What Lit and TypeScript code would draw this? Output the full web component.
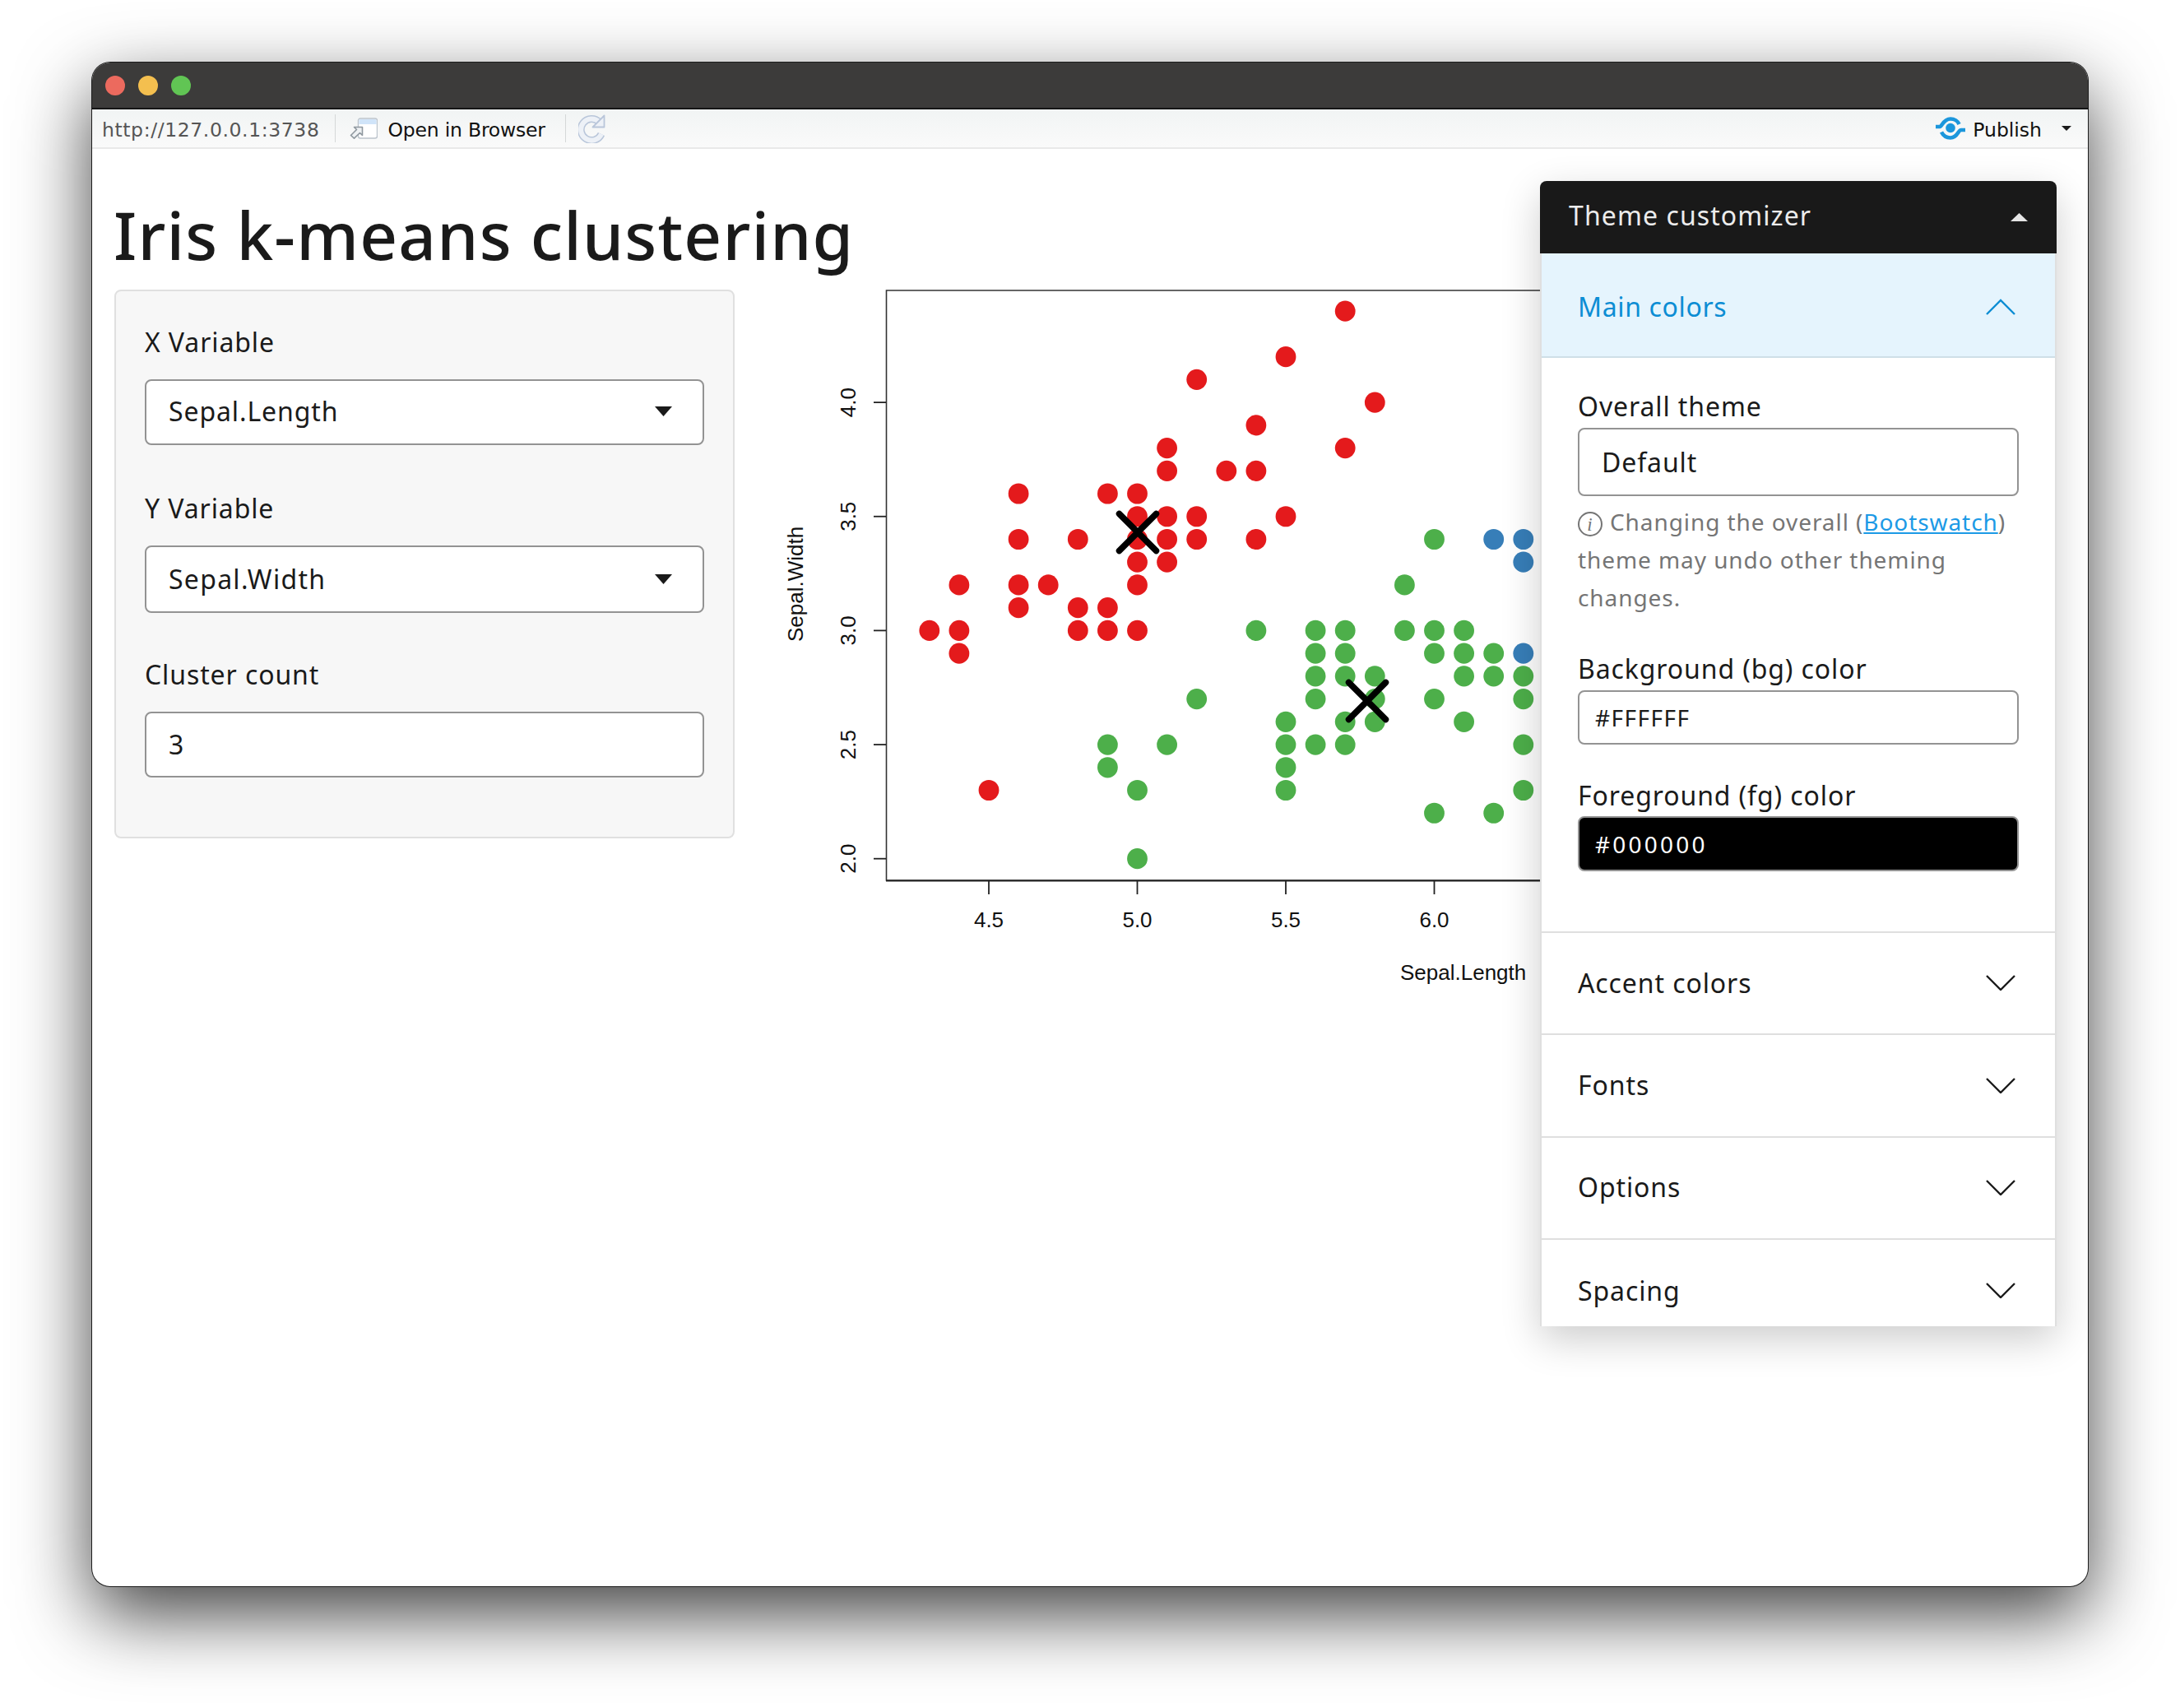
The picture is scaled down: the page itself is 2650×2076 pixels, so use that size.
import { LitElement, html, css, svg } from "lit";
import { customElement } from "lit/decorators.js";

const X = (v: number) => 1202 + (v - 4.5) * 361;
const Y = (v: number) => 1043.7 - (v - 2) * 277.3;

const RED = "5.1,3.5 4.9,3.0 4.7,3.2 4.6,3.1 5.0,3.6 5.4,3.9 4.6,3.4 5.0,3.4 4.4,2.9 4.9,3.1 5.4,3.7 4.8,3.4 4.8,3.0 4.3,3.0 5.8,4.0 5.7,4.4 5.7,3.8 5.1,3.8 5.4,3.4 5.1,3.7 4.6,3.6 5.1,3.3 5.0,3.0 5.2,3.5 5.2,3.4 5.2,4.1 5.5,4.2 5.0,3.2 5.5,3.5 4.9,3.6 4.4,3.0 5.1,3.4 5.0,3.5 4.5,2.3 4.4,3.2 4.6,3.2 5.3,3.7 5.0,3.3 4.8,3.1";
const GREEN = "5.5,2.3 5.7,2.8 4.9,2.4 5.2,2.7 5.0,2.0 5.9,3.0 6.0,2.2 6.1,2.9 5.6,2.9 5.6,3.0 5.8,2.7 6.2,2.2 5.6,2.5 5.9,3.2 6.1,2.8 6.3,2.5 6.0,2.9 5.7,2.6 5.5,2.4 6.0,2.7 5.4,3.0 6.0,3.4 6.3,2.3 5.5,2.5 5.5,2.6 6.1,3.0 5.8,2.6 5.0,2.3 5.6,2.7 5.7,3.0 5.7,2.9 6.2,2.9 5.1,2.5 4.9,2.5 5.7,2.5 5.8,2.8 5.6,2.8 6.3,2.7 6.2,2.8 6.3,2.8 6.1,2.6 6.0,3.0";
const BLUE = "6.2,3.4 6.3,3.4 6.3,3.3 6.3,2.9";
const parse = (s: string) => s.split(" ").map((p) => p.split(",").map(Number));

const chevron = (up: boolean) => html`<svg class="chev" viewBox="0 0 36 20" width="36" height="20" aria-hidden="true">
  <polyline points=${up ? "1,19 18,2 35,19" : "1,2 18,19 35,2"} fill="none" stroke="currentColor" stroke-width="2.4"></polyline>
</svg>`;

const caret = html`<svg class="caret" viewBox="0 0 21 12" width="21" height="12" aria-hidden="true"><polygon points="0,0 21,0 10.5,12" fill="#1a1a1a"></polygon></svg>`;

@customElement("app-root")
export class AppRoot extends LitElement {
  static styles = css`
    :host { display: block; width: 2650px; height: 2076px; padding: 76px 0 0 112px; box-sizing: border-box; background: #fff; overflow: hidden;
      font-family: "Noto Sans", sans-serif; color: #1a1a1a; }
    * { box-sizing: border-box; }
    .window { position: relative; width: 2426px; height: 1852px; border-radius: 22px; display: flex; flex-direction: column; background: #fff;
      box-shadow: 0 0 0 1px #1c1c1c, 0 34px 90px rgba(0,0,0,.75); }
    .titlebar { height: 57px; flex: none; background: #3c3b3a; border-radius: 22px 22px 0 0; border-bottom: 2px solid #151515; display: flex; align-items: center; gap: 16px; padding: 0 0 0 16px; }
    .dot { width: 24px; height: 24px; border-radius: 50%; }
    .toolbar { height: 48px; flex: none; background: linear-gradient(#f1f4f4, #fafafa); border-bottom: 2px solid #e9e9e9; display: flex; align-items: center;
      padding: 0 20px 0 12px; font: 23.5px "DejaVu Sans", sans-serif; color: #111; }
    .url, .open, .pub { padding-top: 3px; }
    .url { color: #555; letter-spacing: .6px; }
    .sep { width: 1px; height: 34px; background: #d5d8d8; }
    .sep.a { margin: 0 17px 0 19px; }
    .sep.b { margin: 0 15px 0 24px; }
    .open { margin-left: 12px; letter-spacing: -.2px; }
    .spacer { flex: 1; }
    .pub { margin-left: 9px; margin-right: 24px; }
    .content { position: relative; flex: 1; padding: 0 0 0 27px; }
    h1 { margin: 56px 0 19px -1px; font-size: 80px; line-height: 96px; font-weight: 500; letter-spacing: .015em; color: #1a1a1a; }
    .row { display: flex; gap: 47px; align-items: flex-start; }
    .card { width: 754px; height: 667px; background: #f7f7f7; border: 2px solid #e0e0e0; border-radius: 8px; padding: 37.5px 35px 0; font-size: 32px; letter-spacing: .028em; }
    .lab { height: 48px; line-height: 48px; margin-bottom: 21px; }
    .ctl { height: 80px; background: #fff; border: 2px solid #939393; border-radius: 8px; display: flex; align-items: center; justify-content: space-between; padding: 0 37px 0 27px; margin-bottom: 53px; }
    .ctl.first { padding-bottom: 2px; }
    .ctl.tall { height: 82px; margin-bottom: 51px; letter-spacing: .04em; }
    .plot { display: block; flex: none; }
    .plot text { font-family: "Liberation Sans", sans-serif; font-size: 26px; fill: #111; }
    .panel { position: absolute; top: 39px; right: 38px; width: 628px; height: 1392px; display: flex; flex-direction: column; overflow: visible; background: #fff; border-radius: 8px 8px 0 0;
      box-shadow: 0 16px 48px rgba(0,0,0,.2); font-size: 32px; letter-spacing: .028em; }
    .phead { height: 88px; flex: none; background: #191919; color: #ececec; border-radius: 8px 8px 0 0; display: flex; align-items: center; justify-content: space-between; padding: 0 35px; font-size: 32px; letter-spacing: .034em; }
    .phead span { margin-top: -5px; }
    .acc { flex: 1; border-left: 2px solid #dfdfdf; border-right: 2px solid #dfdfdf; overflow: hidden; }
    .ah { height: 124.4px; display: flex; align-items: center; justify-content: space-between; padding: 0 48px 2px 44px; border-bottom: 2px solid #dfdfdf; }
    .ah:last-child { border-bottom: 0; }
    .ah.main { height: 127px; padding-top: 4px; padding-bottom: 0; background: #e5f4fd; color: #0c8dd4; border-bottom: 2px solid #cfdfe7; letter-spacing: .02em; }
    .ab { height: 699px; padding: 34px 44px 0; border-bottom: 2px solid #dfdfdf; }
    .ab .lab { height: 50px; line-height: 50px; margin: 0; }
    .sel { height: 83px; margin-top: 1px; border: 2px solid #939393; border-radius: 8px; display: flex; align-items: center; padding-left: 27px; }
    .help { margin: 8px 0 39px; font-size: 28px; line-height: 46px; color: #757575; letter-spacing: .033em; white-space: nowrap; }
    .help div { height: 46px; }
    .help a { color: #1c9ae6; text-decoration: underline; }
    .info { vertical-align: -7px; margin-right: 9px; }
    .info text { font: italic 23px "Liberation Serif", serif; fill: #757575; }
    .color { height: 66px; margin-top: 1px; margin-bottom: 37px; border: 2px solid #939393; border-radius: 8px; display: flex; align-items: center; padding-left: 19px; font-size: 28px; letter-spacing: .052em; }
    .color.fg { height: 67px; background: #000; color: #fff; margin: 0; letter-spacing: .115em; }
  `;

  render() {
    const dots = svg`${[[RED, "#E41A1C"], [GREEN, "#4DAF4A"], [BLUE, "#377EB8"]].map(([pts, col]) =>
      parse(pts).map(([a, b]) => svg`<ellipse cx=${X(a)} cy=${Y(b)} rx="12.4" ry="12.6" fill=${col}></ellipse>`))}`;
    const cross = (cx: number, cy: number) => svg`<path d="M${cx - 22.5} ${cy - 22.5}L${cx + 22.5} ${cy + 22.5}M${cx + 22.5} ${cy - 22.5}L${cx - 22.5} ${cy + 22.5}" stroke="#000" stroke-width="7.5" stroke-linecap="round" fill="none"></path>`;
    return html`
      <div class="window">
        <div class="titlebar">
          <span class="dot" style="background:#ec6a5e"></span>
          <span class="dot" style="background:#f4bf4f"></span>
          <span class="dot" style="background:#61c554"></span>
        </div>
        <div class="toolbar">
          <span class="url">http://127.0.0.1:3738</span>
          <span class="sep a"></span>
          <svg width="34" height="26" viewBox="0 0 34 26" aria-hidden="true">
            <rect x="10.5" y="1" width="23" height="24" rx="2.5" fill="#fff" stroke="#bcc4cc" stroke-width="1.4"></rect>
            <path d="M11.5 8V3.5a1.6 1.6 0 0 1 1.6-1.6H31a1.6 1.6 0 0 1 1.6 1.6V8z" fill="#d0e4f9"></path>
            <path d="M1.5 21.5 8.5 14.5 5.5 11.5H15.5V21.5L12.5 18.5 5.5 25.2z" fill="#eef1f3" stroke="#8f989f" stroke-width="1.6" stroke-linejoin="round"></path>
          </svg>
          <span class="open">Open in Browser</span>
          <span class="sep b"></span>
          <svg width="33" height="35" viewBox="0 0 33 35" aria-hidden="true">
            <path d="M25.5 9.5A13 13 0 1 0 28 24" fill="none" stroke="#b9c6da" stroke-width="9"></path>
            <path d="M25.5 9.5A13 13 0 1 0 28 24" fill="none" stroke="#edf1f7" stroke-width="6"></path>
            <polygon points="31.5,1.5 31.5,15.5 17.5,15.5" fill="#edf1f7" stroke="#b9c6da" stroke-width="1.8" stroke-linejoin="round"></polygon>
          </svg>
          <span class="spacer"></span>
          <svg width="36" height="28" viewBox="0 0 36 28" aria-hidden="true">
            <circle cx="18" cy="13.5" r="5.8" fill="#1c97dc"></circle>
            <path d="M0 12H5C8 12 9 2.5 18 2.5C23 2.5 27 5.5 28.5 9M7 18.5C9 22.5 13 25.5 18 25.5C27 25.5 27 16 31 16H36" fill="none" stroke="#1c97dc" stroke-width="4.6"></path>
          </svg>
          <span class="pub">Publish</span>
          <svg width="12" height="6" viewBox="0 0 12 6" aria-hidden="true"><polygon points="0,0 12,0 6,6" fill="#1a1a1a"></polygon></svg>
        </div>
        <div class="content">
          <h1>Iris k-means clustering</h1>
          <div class="row">
            <div class="card">
              <div class="lab">X Variable</div>
              <div class="ctl first"><span>Sepal.Length</span>${caret}</div>
              <div class="lab">Y Variable</div>
              <div class="ctl tall"><span>Sepal.Width</span>${caret}</div>
              <div class="lab">Cluster count</div>
              <div class="ctl"><span>3</span></div>
            </div>
            <svg class="plot" width="960" height="880" viewBox="940 352 960 880">
              <path d="M1900 353H1077.5V1070H1900" fill="none" stroke="#333" stroke-width="1.6"></path>
              <path d="M1077 1070.5H1900" stroke="#222" stroke-width="2"></path>
              ${[2, 2.5, 3, 3.5, 4].map((v) => svg`
                <path d="M1062 ${Y(v)}H1077" stroke="#222" stroke-width="1.8"></path>
                <text transform="translate(1040 ${Y(v)}) rotate(-90)" text-anchor="middle">${v.toFixed(1)}</text>`)}
              ${[4.5, 5, 5.5, 6].map((v) => svg`
                <path d="M${X(v)} 1070V1087" stroke="#222" stroke-width="1.8"></path>
                <text x=${X(v)} y="1127" text-anchor="middle">${v.toFixed(1)}</text>`)}
              <text x="1702" y="1190.5">Sepal.Length</text>
              <text transform="translate(976 710) rotate(-90)" text-anchor="middle">Sepal.Width</text>
              ${dots}
              ${cross(1383, 647)}
              ${cross(1662, 852)}
            </svg>
          </div>
          <aside class="panel">
            <div class="phead"><span>Theme customizer</span>
              <svg width="21" height="10" viewBox="0 0 21 10" aria-hidden="true"><polygon points="0,10 21,10 10.5,0" fill="#e6e6e6"></polygon></svg>
            </div>
            <div class="acc">
              <div class="ah main"><span>Main colors</span>${chevron(true)}</div>
              <div class="ab">
                <div class="lab">Overall theme</div>
                <div class="sel">Default</div>
                <div class="help">
                  <div><svg class="info" width="30" height="30" viewBox="0 0 30 30" aria-hidden="true"><circle cx="15" cy="15" r="14" fill="none" stroke="#757575" stroke-width="2"></circle><text x="15" y="23" text-anchor="middle">i</text></svg>Changing the overall (<a>Bootswatch</a>)</div>
                  <div>theme may undo other theming</div>
                  <div>changes.</div>
                </div>
                <div class="lab">Background (bg) color</div>
                <div class="color">#FFFFFF</div>
                <div class="lab">Foreground (fg) color</div>
                <div class="color fg">#000000</div>
              </div>
              <div class="ah"><span>Accent colors</span>${chevron(false)}</div>
              <div class="ah"><span>Fonts</span>${chevron(false)}</div>
              <div class="ah"><span>Options</span>${chevron(false)}</div>
              <div class="ah"><span>Spacing</span>${chevron(false)}</div>
            </div>
          </aside>
        </div>
      </div>
    `;
  }
}
